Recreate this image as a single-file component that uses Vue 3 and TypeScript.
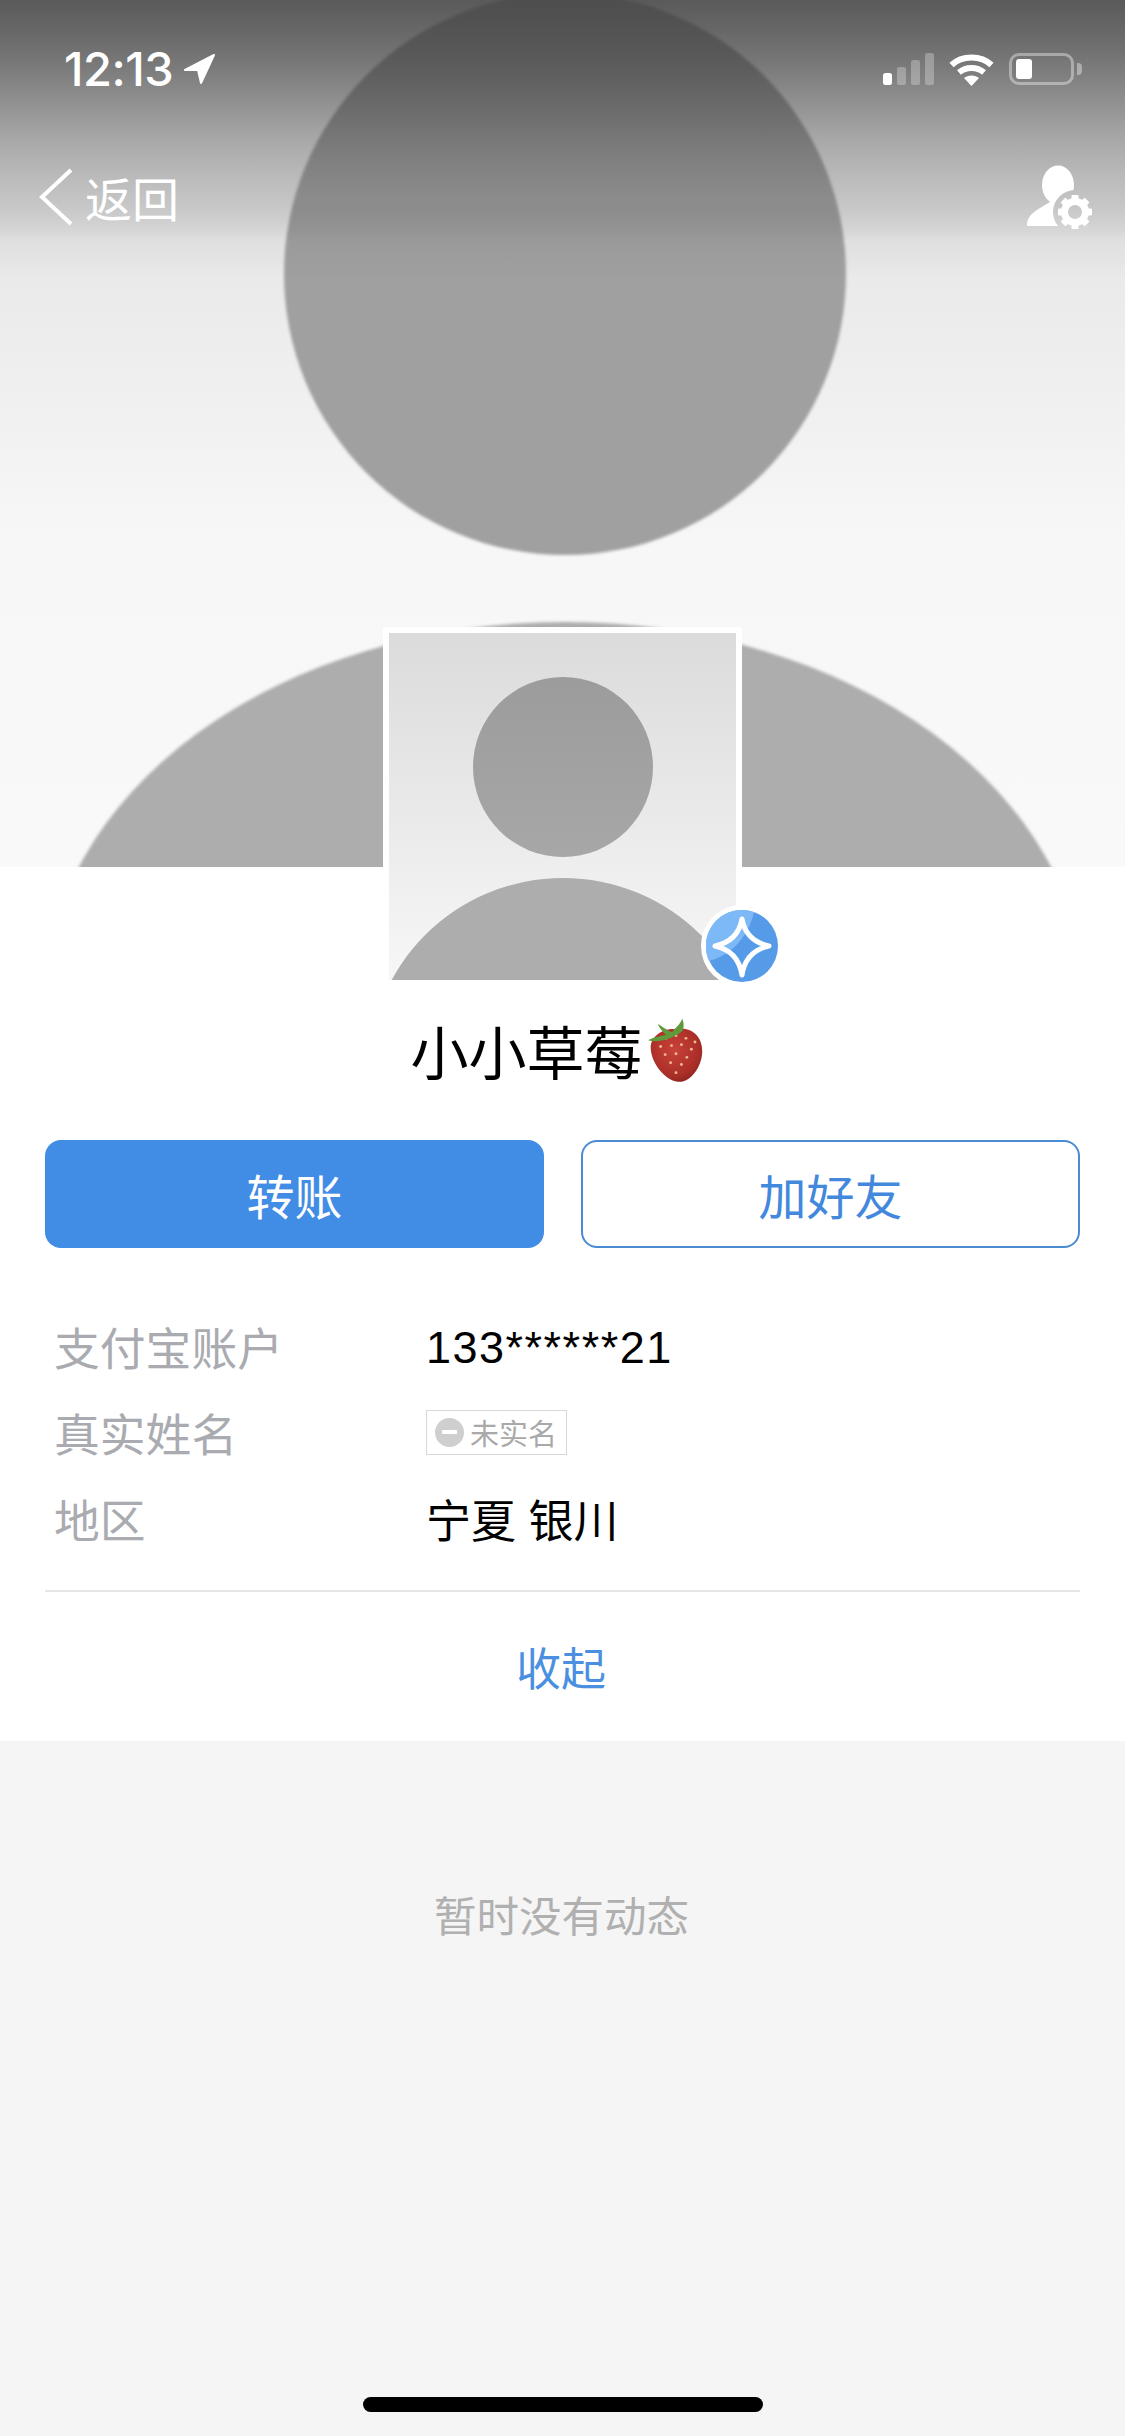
<script setup lang="ts">
interface InfoRow {
  label: string;
  value?: string;
  numeric?: boolean;
}

const rows: InfoRow[] = [
  { label: '支付宝账户', value: '133******21', numeric: true },
  { label: '真实姓名' },
  { label: '地区', value: '宁夏 银川' },
];

const gearTeeth = [0, 45, 90, 135, 180, 225, 270, 315];

const seeds = [
  [20, 22], [31, 19], [42, 22], [52, 26], [14, 31], [26, 30], [37, 29], [48, 34],
  [19, 40], [31, 39], [43, 43], [25, 49], [37, 51], [31, 60],
];
</script>

<template>
  <div class="page">
    <div class="cover">
      <svg class="cover-art" width="1125" height="867" viewBox="0 0 1125 867">
        <defs>
          <linearGradient id="coverBg" x1="0" y1="0" x2="0" y2="1">
            <stop offset="0" stop-color="#e8e8e8" />
            <stop offset="0.3" stop-color="#e9e9e9" />
            <stop offset="0.62" stop-color="#f7f7f7" />
            <stop offset="1" stop-color="#f9f9f9" />
          </linearGradient>
          <linearGradient id="shade" x1="0" y1="0" x2="0" y2="1">
            <stop offset="0" stop-color="#3d3d3d" stop-opacity="0.83" />
            <stop offset="0.24" stop-color="#2b2b2b" stop-opacity="0.58" />
            <stop offset="0.475" stop-color="#252525" stop-opacity="0.35" />
            <stop offset="0.715" stop-color="#444444" stop-opacity="0.22" />
            <stop offset="0.86" stop-color="#000000" stop-opacity="0.04" />
            <stop offset="1" stop-color="#000000" stop-opacity="0" />
          </linearGradient>
          <filter id="soft" color-interpolation-filters="sRGB">
            <feGaussianBlur stdDeviation="1.5" />
          </filter>
        </defs>
        <rect width="1125" height="867" fill="url(#coverBg)" />
        <circle cx="565" cy="274" r="281" fill="#a0a0a0" filter="url(#soft)" />
        <ellipse cx="565" cy="1002" rx="520" ry="380" fill="#adadad" filter="url(#soft)" />
        <rect width="1125" height="280" fill="url(#shade)" />
      </svg>

      <div class="status-bar">
        <div class="status-left">
          <span class="time">12:13</span>
          <svg width="31" height="30" viewBox="0 0 31 30">
            <path d="M30 1 L1 16 L14 16 L17 29 Z" fill="#fff" stroke="#fff" stroke-width="2" stroke-linejoin="round" />
          </svg>
        </div>
        <div class="status-right">
          <div class="signal">
            <span class="bar bar-on"></span>
            <span class="bar bar-2"></span>
            <span class="bar bar-3"></span>
            <span class="bar bar-4"></span>
          </div>
          <svg width="45" height="33" viewBox="0 0 45 33">
            <path d="M2.5 12 C13 2 32 2 42.5 12" fill="none" stroke="#fff" stroke-width="6" />
            <path d="M10 19.5 C17 13.5 28 13.5 35 19.5" fill="none" stroke="#fff" stroke-width="6" />
            <path d="M15 25 C19 21.5 26 21.5 30 25 L22.5 33 Z" fill="#fff" />
          </svg>
          <div class="battery">
            <div class="battery-body"><span class="battery-fill"></span></div>
            <span class="battery-cap"></span>
          </div>
        </div>
      </div>

      <div class="nav-bar">
        <div class="back">
          <svg width="34" height="58" viewBox="0 0 34 58">
            <path d="M32 2 L3 29 L32 56" fill="none" stroke="#fff" stroke-width="4" />
          </svg>
          <span>返回</span>
        </div>
        <svg width="70" height="66" viewBox="0 0 70 66">
          <defs>
            <mask id="gearCut">
              <rect width="70" height="66" fill="#fff" />
              <circle cx="50" cy="48" r="22" fill="#000" />
            </mask>
          </defs>
          <g mask="url(#gearCut)" fill="#fff">
            <ellipse cx="33" cy="21" rx="16" ry="19.5" />
            <path d="M2 62 C2 50 12 46 25 38 L41 38 L50 62 Z" />
          </g>
          <circle cx="50" cy="48" r="10.5" fill="none" stroke="#fff" stroke-width="7" />
          <rect
            v-for="angle in gearTeeth"
            :key="angle"
            x="46.5"
            y="31"
            width="7"
            height="7"
            rx="1"
            fill="#fff"
            :transform="`rotate(${angle} 50 48)`"
          />
        </svg>
      </div>
    </div>

    <section class="profile">
      <div class="avatar">
        <svg width="347" height="347" viewBox="0 0 347 347">
          <defs>
            <linearGradient id="avatarBg" x1="0" y1="0" x2="0" y2="1">
              <stop offset="0" stop-color="#dbdbdb" />
              <stop offset="1" stop-color="#f7f7f7" />
            </linearGradient>
            <linearGradient id="avatarHead" x1="0" y1="0" x2="0" y2="1">
              <stop offset="0" stop-color="#9c9c9c" />
              <stop offset="1" stop-color="#a7a7a7" />
            </linearGradient>
          </defs>
          <rect width="347" height="347" fill="url(#avatarBg)" />
          <circle cx="174" cy="134" r="90" fill="url(#avatarHead)" />
          <circle cx="174" cy="440" r="195" fill="#adadad" />
        </svg>
        <div class="vip-badge">
          <svg width="72" height="72" viewBox="0 0 72 72">
            <circle cx="36" cy="36" r="36" fill="#559be8" />
            <path d="M36 0 A36 36 0 0 0 3 51 C25 45 42 28 48 2 A36 36 0 0 0 36 0 Z" fill="#7db9f6" />
            <path
              d="M36 9 C38.5 23 47 32.5 63 36 C47 39.5 38.5 49 36 65 C33.5 49 25 39.5 9 36 C25 32.5 33.5 23 36 9 Z"
              fill="none"
              stroke="#fff"
              stroke-width="5"
              stroke-linejoin="round"
            />
          </svg>
        </div>
      </div>

      <div class="name">
        <span>小小草莓</span>
        <svg class="strawberry" width="56" height="66" viewBox="0 0 62 72">
          <defs>
            <radialGradient id="berry" cx="0.45" cy="0.4" r="0.7">
              <stop offset="0" stop-color="#c8423a" />
              <stop offset="0.7" stop-color="#aa2e28" />
              <stop offset="1" stop-color="#7f1f1c" />
            </radialGradient>
          </defs>
          <path d="M31 12 C48 8 61 20 60 38 C59 56 45 72 33 70 C18 68 3 48 3 32 C3 20 17 10 31 12 Z" fill="url(#berry)" />
          <circle v-for="(s, i) in seeds" :key="i" :cx="s[0]" :cy="s[1]" r="1.6" fill="#f0b98a" />
          <path d="M0 24 C8 20 14 20 20 18 C16 14 12 10 11 6 C18 10 22 14 27 15 C30 10 35 8 38 0 C40 6 40 10 38 14 C30 20 14 28 0 24 Z" fill="#5f9a3d" />
        </svg>
      </div>

      <div class="actions">
        <button class="btn btn-primary" type="button">转账</button>
        <button class="btn btn-outline" type="button">加好友</button>
      </div>

      <div class="info">
        <div v-for="row in rows" :key="row.label" class="info-row">
          <span class="info-label">{{ row.label }}</span>
          <span v-if="row.value" :class="['info-value', { 'info-number': row.numeric }]">{{ row.value }}</span>
          <span v-else class="unverified">
            <i class="unverified-icon"></i>
            <span>未实名</span>
          </span>
        </div>
      </div>

      <div class="divider"></div>
      <div class="collapse">收起</div>
    </section>

    <section class="feed">
      <p class="empty">暂时没有动态</p>
      <div class="home-bar"></div>
    </section>
  </div>
</template>

<style scoped>
.page {
  width: 1125px;
  height: 2436px;
  display: flex;
  flex-direction: column;
  overflow: hidden;
  background: #f5f5f5;
  font-family: "Noto Sans CJK SC", "Liberation Sans", sans-serif;
}

.cover {
  position: relative;
  height: 867px;
  flex-shrink: 0;
  padding-top: 51px;
  box-sizing: border-box;
}

.cover-art {
  position: absolute;
  top: 0;
  left: 0;
}

.status-bar {
  position: relative;
  height: 36px;
  display: flex;
  justify-content: space-between;
  align-items: center;
  padding: 0 43px 0 64px;
}

.status-left {
  display: flex;
  align-items: center;
  gap: 11px;
}

.time {
  color: #fff;
  font-family: Inter, "Liberation Sans", sans-serif;
  font-size: 47px;
  font-weight: 500;
  line-height: 36px;
  letter-spacing: -0.5px;
}

.status-right {
  display: flex;
  align-items: center;
  gap: 15px;
}

.signal {
  display: flex;
  align-items: flex-end;
  gap: 5px;
  height: 32px;
}

.bar {
  width: 9px;
  border-radius: 2.5px;
  background: rgba(255, 255, 255, 0.28);
}

.bar-on {
  height: 12px;
  background: #fff;
}

.bar-2 {
  height: 18px;
}

.bar-3 {
  height: 25px;
}

.bar-4 {
  height: 32px;
}

.battery {
  display: flex;
  align-items: center;
  gap: 3px;
}

.battery-body {
  width: 65px;
  height: 32px;
  box-sizing: border-box;
  border: 3px solid rgba(255, 255, 255, 0.38);
  border-radius: 10px;
  padding: 3px 4px;
}

.battery-fill {
  display: block;
  width: 16px;
  height: 100%;
  border-radius: 3px;
  background: #fff;
}

.battery-cap {
  width: 5px;
  height: 12px;
  border-radius: 0 4px 4px 0;
  background: rgba(255, 255, 255, 0.38);
}

.nav-bar {
  position: relative;
  margin-top: 77px;
  display: flex;
  justify-content: space-between;
  align-items: center;
  padding: 0 30px 0 39px;
}

.back {
  display: flex;
  align-items: center;
  gap: 12px;
  color: #fff;
  font-size: 47px;
  line-height: 58px;
}

.profile {
  position: relative;
  height: 874px;
  flex-shrink: 0;
  display: flex;
  flex-direction: column;
  align-items: center;
  background: #fff;
}

.avatar {
  position: relative;
  width: 359px;
  height: 359px;
  box-sizing: border-box;
  margin-top: -240px;
  border: 6px solid #fff;
  border-radius: 2px;
}

.avatar > svg {
  display: block;
}

.vip-badge {
  position: absolute;
  right: -47px;
  bottom: -7px;
  width: 72px;
  height: 72px;
  border: 5px solid #fff;
  border-radius: 50%;
  background: #fff;
}

.vip-badge svg {
  display: block;
}

.name {
  height: 90px;
  margin-top: 19px;
  padding-right: 11px;
  display: flex;
  align-items: center;
  gap: 5px;
  color: #000;
  font-size: 58px;
  line-height: 90px;
}

.strawberry {
  margin-top: 2px;
}

.actions {
  width: 100%;
  box-sizing: border-box;
  margin-top: 45px;
  padding: 0 45px;
  display: grid;
  grid-template-columns: 1fr 1fr;
  gap: 37px;
}

.btn {
  height: 108px;
  padding: 0;
  border-radius: 16px;
  font-family: inherit;
  font-size: 48px;
}

.btn-primary {
  border: none;
  background: #418ce4;
  color: #fff;
}

.btn-outline {
  border: 2px solid #4a8bd3;
  background: #fff;
  color: #4288dc;
}

.info {
  width: 100%;
  box-sizing: border-box;
  margin-top: 55px;
  padding-left: 54px;
}

.info-row {
  height: 86px;
  display: flex;
  align-items: center;
}

.info-label {
  width: 372px;
  color: #a9abb0;
  font-size: 45.8px;
}

.info-value {
  color: #000;
  font-family: "Liberation Sans", "Noto Sans CJK SC", sans-serif;
  font-size: 45px;
}

.info-number {
  padding-top: 3px;
  letter-spacing: 1.5px;
}

.unverified {
  width: 141px;
  height: 45px;
  box-sizing: border-box;
  padding-left: 8px;
  display: flex;
  align-items: center;
  gap: 6px;
  border: 1.5px solid #d8d8d8;
  color: #a9a9a9;
  font-size: 29px;
}

.unverified-icon {
  position: relative;
  width: 29px;
  height: 29px;
  border-radius: 50%;
  background: #cfcfcf;
}

.unverified-icon::after {
  content: "";
  position: absolute;
  left: 7px;
  right: 7px;
  top: 12.5px;
  height: 4px;
  background: #fff;
}

.divider {
  width: 1035px;
  height: 2px;
  margin-top: 29px;
  background: #e6e6e6;
}

.collapse {
  flex: 1;
  padding-right: 3px;
  display: flex;
  align-items: center;
  color: #4a8fe0;
  font-size: 45px;
}

.feed {
  flex: 1;
  display: flex;
  flex-direction: column;
  align-items: center;
  padding-bottom: 24px;
  background: #f5f5f5;
}

.empty {
  margin: 143px 2px 0 0;
  color: #b0b0b0;
  font-size: 42.5px;
  line-height: 60px;
}

.home-bar {
  width: 400px;
  height: 15px;
  margin-top: auto;
  border-radius: 8px;
  background: #000;
}
</style>
